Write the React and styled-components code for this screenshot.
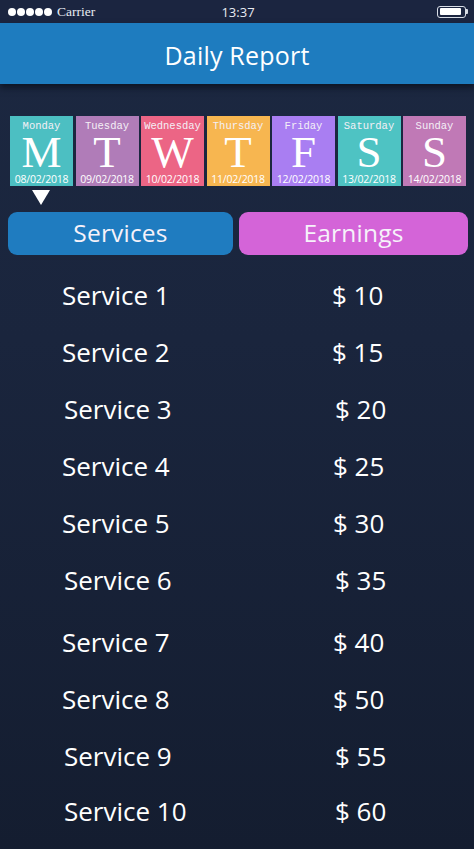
import React from 'react'
import styled, { createGlobalStyle } from 'styled-components'

const GlobalStyle = createGlobalStyle`
  html, body {
    margin: 0;
    padding: 0;
    background: #1a253d;
  }
  * { box-sizing: border-box; }
`

const Screen = styled.div`
  width: 474px;
  height: 849px;
  overflow: hidden;
  background: linear-gradient(180deg, #1c2841 0%, #1a253d 40%, #141d30 100%);
  font-family: "Open Sans", "Noto Sans", sans-serif;
  color: #ffffff;
  display: flex;
  flex-direction: column;
`

const StatusBar = styled.div`
  height: 23px;
  background: #1b2540;
  display: grid;
  grid-template-columns: 1fr auto 1fr;
  align-items: center;
  padding: 0 6px 0 8px;
`

const Carrier = styled.div`
  display: flex;
  align-items: center;
  gap: 5px;
  font-family: "Liberation Serif", serif;
  font-size: 13.5px;
  color: #e8ecf2;
`

const Dots = styled.span`
  display: flex;
  gap: 1px;
`

const Dot = styled.span`
  width: 8px;
  height: 8px;
  border-radius: 50%;
  background: #ffffff;
`

const Clock = styled.div`
  font-size: 13px;
  color: #e8ecf2;
`

const Battery = styled.div`
  justify-self: end;
  display: flex;
  align-items: center;
`

const BatteryBody = styled.span`
  width: 29px;
  height: 12px;
  border: 1.5px solid #d8dde6;
  border-radius: 3px;
  padding: 1.5px;
  display: flex;
`

const BatteryFill = styled.span`
  flex: 1;
  background: #ffffff;
  border-radius: 1px;
  margin-right: 3px;
`

const BatteryTip = styled.span`
  width: 2px;
  height: 5px;
  background: #d8dde6;
  border-radius: 0 1px 1px 0;
`

const Header = styled.header`
  height: 61px;
  padding-top: 2px;
  background: #1e7cbf;
  display: flex;
  align-items: center;
  justify-content: center;
  box-shadow: 0 4px 6px rgba(5, 10, 20, 0.6);
  font-size: 25px;
  letter-spacing: 0.2px;
`

const Week = styled.div`
  display: grid;
  grid-template-columns: repeat(7, 63px);
  column-gap: 2.5px;
  padding: 32px 0 0 10px;
`

const DayCard = styled.div`
  height: 70px;
  background: ${({ colour }) => colour};
  display: flex;
  flex-direction: column;
  align-items: center;
  padding-top: 4px;
  position: relative;
`

const DayName = styled.div`
  font-family: "Liberation Mono", monospace;
  font-size: 10.5px;
  line-height: 12px;
  color: #f4f0f6;
`

const DayLetter = styled.div`
  font-family: "Liberation Serif", serif;
  font-size: 45px;
  line-height: 40px;
  height: 40px;
  color: #ffffff;
`

const DayDate = styled.div`
  font-size: 10.5px;
  line-height: 14px;
  letter-spacing: -0.2px;
  color: #ffffff;
`

const Pointer = styled.div`
  position: absolute;
  top: 74px;
  left: 22px;
  width: 0;
  height: 0;
  border-left: 9px solid transparent;
  border-right: 9px solid transparent;
  border-top: 15px solid #ffffff;
`

const Tabs = styled.div`
  display: grid;
  grid-template-columns: 225px 229px;
  column-gap: 6px;
  padding: 26px 0 0 8px;
`

const Tab = styled.div`
  height: 43px;
  padding-bottom: 3px;
  border-radius: 9px;
  background: ${({ colour }) => colour};
  display: flex;
  align-items: center;
  justify-content: center;
  font-size: 24.5px;
  color: #f6f2fa;
  letter-spacing: 0.2px;
`

const List = styled.div`
  display: flex;
  flex-direction: column;
  padding-top: 11px;
`

const Row = styled.div`
  height: 57px;
  margin-top: ${({ shift }) => shift}px;
  display: grid;
  grid-template-columns: 270px 1fr;
  align-items: center;
  font-size: 26px;
  color: #ffffff;
`

const Name = styled.span`
  padding-left: ${({ nudge }) => 62 + nudge}px;
`

const Amount = styled.span`
  padding-left: ${({ nudge }) => 62 + nudge}px;
`

const days = [
  { name: 'Monday', letter: 'M', date: '08/02/2018', colour: '#4cbfc2' },
  { name: 'Tuesday', letter: 'T', date: '09/02/2018', colour: '#b07cb8' },
  { name: 'Wednesday', letter: 'W', date: '10/02/2018', colour: '#ec6585' },
  { name: 'Thursday', letter: 'T', date: '11/02/2018', colour: '#f7b650' },
  { name: 'Friday', letter: 'F', date: '12/02/2018', colour: '#a97ef2' },
  { name: 'Saturday', letter: 'S', date: '13/02/2018', colour: '#4ec3c3' },
  { name: 'Sunday', letter: 'S', date: '14/02/2018', colour: '#c079b6' },
]

const services = [
  { name: 'Service 1', amount: '$ 10', shift: 0, n: 0, a: 0 },
  { name: 'Service 2', amount: '$ 15', shift: 0, n: 0, a: 0 },
  { name: 'Service 3', amount: '$ 20', shift: 0, n: 2, a: 3 },
  { name: 'Service 4', amount: '$ 25', shift: 0, n: 0, a: 1 },
  { name: 'Service 5', amount: '$ 30', shift: 0, n: 0, a: 1 },
  { name: 'Service 6', amount: '$ 35', shift: 0, n: 2, a: 3 },
  { name: 'Service 7', amount: '$ 40', shift: 5, n: 0, a: 1 },
  { name: 'Service 8', amount: '$ 50', shift: 0, n: 0, a: 1 },
  { name: 'Service 9', amount: '$ 55', shift: 0, n: 2, a: 3 },
  { name: 'Service 10', amount: '$ 60', shift: -2, n: 2, a: 3 },
]

const App = () => (
  <Screen>
    <GlobalStyle />
    <StatusBar>
      <Carrier>
        <Dots>
          {[0, 1, 2, 3, 4].map(i => <Dot key={i} />)}
        </Dots>
        Carrier
      </Carrier>
      <Clock>13:37</Clock>
      <Battery>
        <BatteryBody><BatteryFill /></BatteryBody>
        <BatteryTip />
      </Battery>
    </StatusBar>
    <Header>Daily Report</Header>
    <Week>
      {days.map((d, i) => (
        <DayCard key={d.name} colour={d.colour}>
          <DayName>{d.name}</DayName>
          <DayLetter>{d.letter}</DayLetter>
          <DayDate>{d.date}</DayDate>
          {i === 0 && <Pointer />}
        </DayCard>
      ))}
    </Week>
    <Tabs>
      <Tab colour="#1f7cc0">Services</Tab>
      <Tab colour="#d464d8">Earnings</Tab>
    </Tabs>
    <List>
      {services.map(s => (
        <Row key={s.name} shift={s.shift}>
          <Name nudge={s.n}>{s.name}</Name>
          <Amount nudge={s.a}>{s.amount}</Amount>
        </Row>
      ))}
    </List>
  </Screen>
)

export default App
